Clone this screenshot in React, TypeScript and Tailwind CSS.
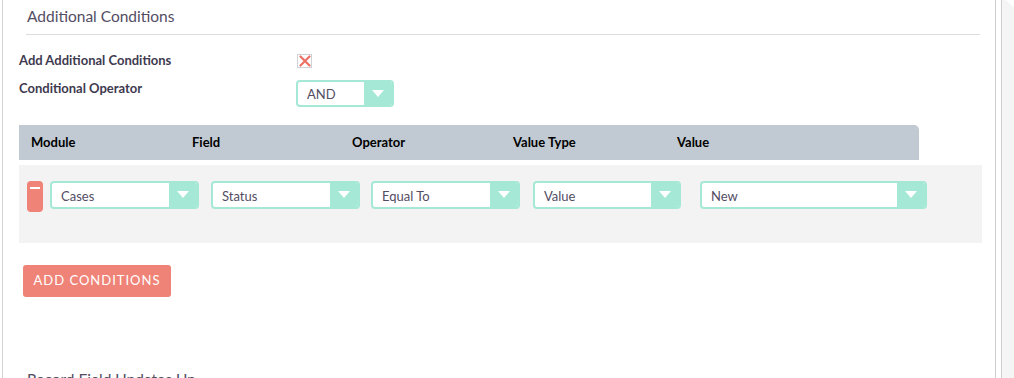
import React from "react";

const textColor = "text-[#534d64]";

function Select({ value, width }: { value: string; width: string }) {
  return (
    <div
      className={`${width} flex h-[28px] shrink-0 overflow-hidden rounded-[4px] border-2 border-[#a5e8d6] bg-white`}
    >
      <div className={`flex flex-1 items-center pl-[9px] pt-[3px] text-[13px] ${textColor}`}>{value}</div>
      <div className="flex w-[28px] items-center justify-center bg-[#a5e8d6]">
        <svg width="12" height="8" viewBox="0 0 12 8">
          <path d="M0 0 L12 0 L6 7 Z" fill="#fff" />
        </svg>
      </div>
    </div>
  );
}

export default function App() {
  const cols = [
    { label: "Module", w: "w-[161px]" },
    { label: "Field", w: "w-[160px]" },
    { label: "Operator", w: "w-[161px]" },
    { label: "Value Type", w: "w-[164px]" },
    { label: "Value", w: "w-[100px]" },
  ];

  return (
    <div
      className="flex h-[378px] w-[1014px] overflow-hidden bg-white"
      style={{ fontFamily: "Lato, 'Open Sans', sans-serif" }}
    >
      <div className="w-[2px] shrink-0 bg-white" />
      <div className="w-[1px] shrink-0 bg-[#d4d4d4]" />

      <div className="flex w-[992px] shrink-0 flex-col pl-[16px]">
        {/* section title */}
        <div className="ml-[7px] mr-[15px] shrink-0 border-b border-[#dcdcdc] pb-[8px] pl-[1px] pt-[6px]">
          <h3 className={`text-[15.5px] leading-[20px] ${textColor}`}>Additional Conditions</h3>
        </div>

        {/* options */}
        <div className="mt-[17px] flex h-[18px] shrink-0 items-center">
          <span className="w-[278px] text-[13px] font-bold text-[#3e3a4f]">Add Additional Conditions</span>
          <span className="flex h-[14px] w-[15px] items-center justify-center border border-[#cfd3d8] bg-white">
            <svg width="12" height="12" viewBox="0 0 12 12">
              <path d="M1.5 1.5 L10.5 10.5 M10.5 1.5 L1.5 10.5" stroke="#ee6f64" strokeWidth="2.2" strokeLinecap="round" />
            </svg>
          </span>
        </div>
        <div className="mt-[2px] flex shrink-0 items-start">
          <span className="w-[277px] pt-[7px] text-[13px] leading-[18px] font-bold text-[#3e3a4f]">Conditional Operator</span>
          <div className="mt-[8px] flex h-[27px] w-[98px] overflow-hidden rounded-[4px] border-2 border-[#a5e8d6] bg-white">
            <div className={`flex flex-1 items-center pl-[9px] pt-[3px] text-[13px] ${textColor}`}>AND</div>
            <div className="flex w-[28px] items-center justify-center bg-[#a5e8d6]">
              <svg width="12" height="8" viewBox="0 0 12 8">
                <path d="M0 0 L12 0 L6 7 Z" fill="#fff" />
              </svg>
            </div>
          </div>
        </div>

        {/* conditions table header */}
        <div className="mt-[18px] flex h-[35px] w-[900px] shrink-0 items-center rounded-tr-[5px] bg-[#c1cad2] pl-[12px]">
          {cols.map((c) => (
            <span key={c.label} className={`${c.w} text-[13px] font-bold text-black`}>
              {c.label}
            </span>
          ))}
        </div>

        {/* condition row */}
        <div className="mt-[5px] flex h-[78px] w-[963px] shrink-0 items-start bg-[#f3f3f3] pl-[8px] pt-[16px]">
          <div className="flex h-[31px] w-[16px] shrink-0 justify-center rounded-[4px] bg-[#f08377] pt-[6px]">
            <div className="h-[2px] w-[10px] bg-white" />
          </div>
          <div className="ml-[7px]">
            <Select value="Cases" width="w-[149px]" />
          </div>
          <div className="ml-[12px]">
            <Select value="Status" width="w-[149px]" />
          </div>
          <div className="ml-[11px]">
            <Select value="Equal To" width="w-[149px]" />
          </div>
          <div className="ml-[13px]">
            <Select value="Value" width="w-[148px]" />
          </div>
          <div className="ml-[19px]">
            <Select value="New" width="w-[227px]" />
          </div>
        </div>

        {/* add button */}
        <div className="mt-[22px] shrink-0 pl-[4px]">
          <button className="h-[32px] w-[148px] rounded-[3px] bg-[#f08377] text-[13px] tracking-[1px] text-white">
            ADD CONDITIONS
          </button>
        </div>

        <div className="mt-[72px] shrink-0 pl-[8px]">
          <h3 className={`text-[15.5px] leading-[20px] ${textColor}`}>Record Field Updates Un</h3>
        </div>
      </div>

      <div className="w-[1px] shrink-0 bg-[#cfcfcf]" />
      <div className="w-[5px] shrink-0 bg-white" />
      <div className="w-[1px] shrink-0 bg-[#cfcfcf]" />
      <div className="relative flex-1 bg-[#f5f5f5]">
        <div className="absolute right-0 top-0 h-0 w-0 border-l-[8px] border-t-[8px] border-l-transparent border-t-white" />
      </div>
    </div>
  );
}
